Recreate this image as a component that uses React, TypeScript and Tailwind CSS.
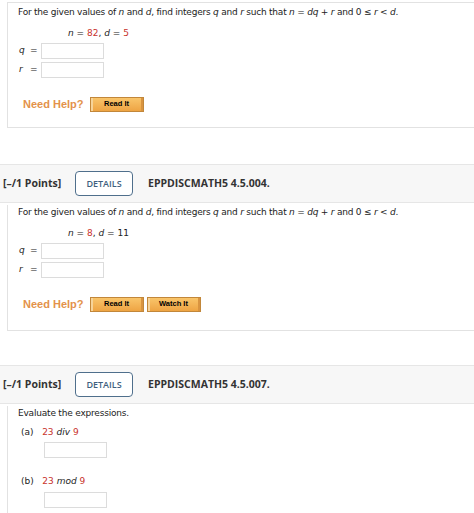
import React from "react"

const RED = "text-[#c8322c]"

function Box({ className = "" }: { className?: string }) {
  return <div className={`h-[16px] w-[63px] border border-[#dcdcdc] bg-white ${className}`} />
}

function HelpBtn({ label }: { label: string }) {
  return (
    <div className="flex h-[15px] w-[54px] items-center justify-center border border-[#c2873a] bg-gradient-to-b from-[#f9c56a] to-[#eea443] shadow-[inset_2px_0_0_#f6d49a,inset_-2px_0_0_#d99440] font-['Liberation_Sans',Arial,sans-serif] text-[7.5px] font-bold text-black">
      {label}
    </div>
  )
}

function NeedHelp({ video }: { video?: boolean }) {
  return (
    <div className="mt-[18px] flex h-[16px] items-center pl-[5px]">
      <span className="font-['Liberation_Sans',Arial,sans-serif] text-[11px] font-bold text-[#e3924a]">Need Help?</span>
      <div className="ml-[6px] flex gap-[3px]">
        <HelpBtn label="Read It" />
        {video && <HelpBtn label="Watch It" />}
      </div>
    </div>
  )
}

function Header({ code }: { code: string }) {
  return (
    <div className="flex h-[39px] items-center border-y border-[#e6e6e6] bg-[#f7f7f7] pl-[3px] font-['Open_Sans',sans-serif] text-[10.5px] font-bold text-[#333]">
      <span className="w-[72px]">[–/1 Points]</span>
      <div className="flex h-[25px] w-[58px] items-center justify-center rounded-[4px] border border-[#4f6f8c] bg-white text-[9px] font-semibold text-[#3f5f7e]">
        DETAILS
      </div>
      <span className="ml-[15px]">{code}</span>
    </div>
  )
}

function Label({ v }: { v: string }) {
  return (
    <span className="flex w-[23px] items-center">
      <i className="w-[12px] pl-[1px]">{v}</i>
      <span>=</span>
    </span>
  )
}

function DivModProblem({ n, d, red }: { n: string; d: string; red: "n" | "both" }) {
  return (
    <>
      <p className="mt-[2px] h-[14px] leading-[14px] whitespace-nowrap tracking-[-0.22px]">
        For the given values of <i>n</i> and <i>d</i>, find integers <i>q</i> and <i>r</i> such that <i>n</i> = <i>dq</i> + <i>r</i> and 0 ≤ <i>r</i> &lt; <i>d</i>.
      </p>
      <p className="mt-[7px] h-[14px] pl-[50px] leading-[14px]">
        <i>n</i> = <span className={RED}>{n}</span>, <i>d</i> = <span className={red === "both" ? RED : ""}>{d}</span>
      </p>
      <div className="mt-[3px] flex h-[16px] items-center">
        <Label v="q" />
        <Box />
      </div>
      <div className="mt-[3px] flex h-[16px] items-center">
        <Label v="r" />
        <Box />
      </div>
    </>
  )
}

export default function App() {
  return (
    <div className="relative h-[513px] w-[474px] overflow-hidden bg-white font-['DejaVu_Sans',Verdana,sans-serif] text-[9px] text-[#222]">
      <div className="mt-[2px] ml-[7px] h-[126px] border-y border-l border-[#e2e2e2] pl-[10px]">
        <DivModProblem n="82" d="5" red="both" />
        <NeedHelp />
      </div>

      <div className="mt-[36px]">
        <Header code="EPPDISCMATH5 4.5.004." />
        <div className="ml-[7px] h-[126px] border-b border-l border-[#e2e2e2] pl-[10px]">
          <DivModProblem n="8" d="11" red="n" />
          <NeedHelp video />
        </div>
      </div>

      <div className="mt-[34px]">
        <Header code="EPPDISCMATH5 4.5.007." />
        <div className="ml-[7px] h-[200px] border-l border-[#e2e2e2] pl-[10px]">
          <p className="mt-[2px] h-[14px] leading-[14px] tracking-[-0.2px]">Evaluate the expressions.</p>
          <p className="mt-[5px] h-[14px] pl-[3px] leading-[14px]">
            (a)&nbsp;&nbsp; <span className={RED}>23</span> <i>div</i> <span className={RED}>9</span>
          </p>
          <Box className="mt-[3px] ml-[26px]" />
          <p className="mt-[16px] h-[14px] pl-[3px] leading-[14px]">
            (b)&nbsp;&nbsp; <span className={RED}>23</span> <i>mod</i> <span className={RED}>9</span>
          </p>
          <Box className="mt-[4px] ml-[26px]" />
        </div>
      </div>
    </div>
  )
}
